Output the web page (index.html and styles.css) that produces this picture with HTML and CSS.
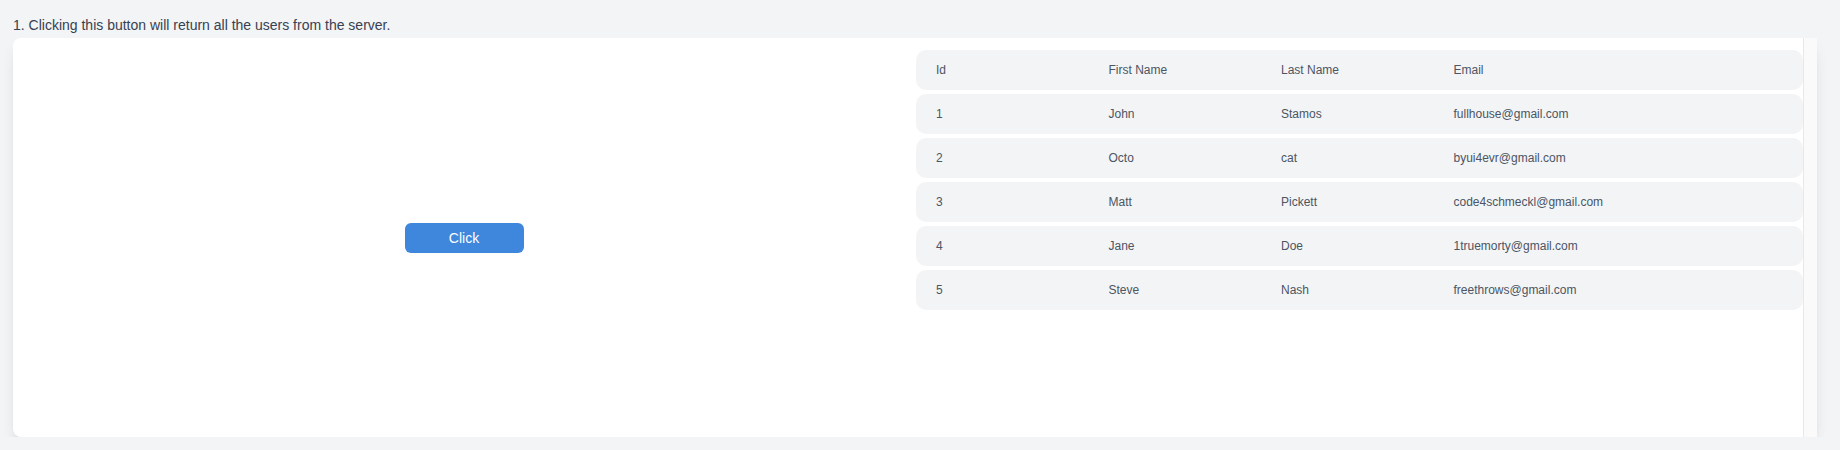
FILE: index.html
```html
<!DOCTYPE html>
<html>
<head>
<meta charset="utf-8">
<link rel="stylesheet" href="styles.css">
</head>
<body>
<div class="page">
  <p class="intro">1. Clicking this button will return all the users from the server.</p>
  <div class="card">
    <div class="left">
      <button class="btn">Click</button>
    </div>
    <div class="right">
      <div class="table">
        <div class="row"><span>Id</span><span>First Name</span><span>Last Name</span><span>Email</span></div>
        <div class="row"><span>1</span><span>John</span><span>Stamos</span><span>fullhouse@gmail.com</span></div>
        <div class="row"><span>2</span><span>Octo</span><span>cat</span><span>byui4evr@gmail.com</span></div>
        <div class="row"><span>3</span><span>Matt</span><span>Pickett</span><span>code4schmeckl@gmail.com</span></div>
        <div class="row"><span>4</span><span>Jane</span><span>Doe</span><span>1truemorty@gmail.com</span></div>
        <div class="row"><span>5</span><span>Steve</span><span>Nash</span><span>freethrows@gmail.com</span></div>
      </div>
      <div class="track"></div>
    </div>
  </div>
</div>
</body>
</html>
```

FILE: styles.css
```css
html, body {
  margin: 0;
  padding: 0;
  background: #f3f4f6;
  font-family: "Liberation Sans", Arial, sans-serif;
}
.page {
  padding: 15px 23px 0 13px;
}
.intro {
  margin: 0 0 3px 0;
  font-size: 14px;
  line-height: 20px;
  color: #374151;
}
.card {
  display: flex;
  height: 399px;
  background: #ffffff;
  border-radius: 8px 0 0 8px;
  box-shadow: 0 10px 15px -3px rgba(0,0,0,0.1), 0 4px 6px -4px rgba(0,0,0,0.1);
}
.left {
  flex: 1;
  display: flex;
  align-items: center;
  justify-content: center;
}
.btn {
  width: 119px;
  height: 30px;
  border: none;
  border-radius: 6px;
  background: #3e87dc;
  color: #ffffff;
  font-family: "Liberation Sans", Arial, sans-serif;
  font-size: 14px;
  padding: 0;
  margin-top: 1px;
}
.right {
  flex: 1;
  display: flex;
}
.table {
  flex: 1;
  padding: 12px 0 0 1px;
  display: flex;
  flex-direction: column;
  gap: 4px;
}
.row {
  display: grid;
  grid-template-columns: 172.5px 172.5px 172.5px 1fr;
  align-items: center;
  height: 40px;
  padding-left: 20px;
  background: #f3f4f6;
  border-radius: 10px;
  font-size: 12px;
  color: #4b5563;
}
.track {
  width: 13px;
  background: #fafafa;
  border-left: 1px solid #e8e8e8;
}
```
